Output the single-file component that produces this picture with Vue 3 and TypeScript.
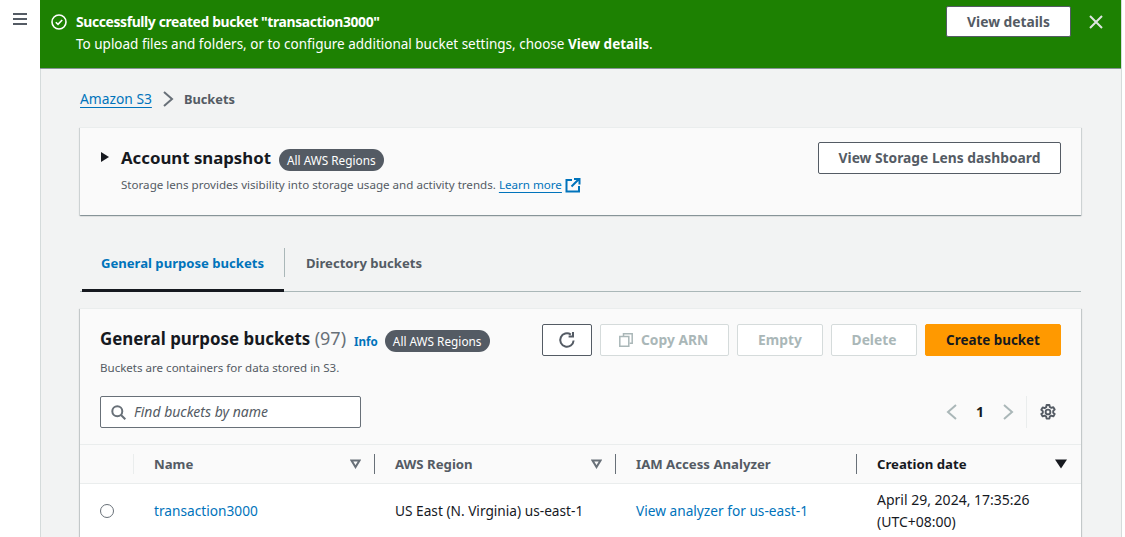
<script setup lang="ts">
interface Col { label: string; width: number; filter: 'none' | 'outline' | 'solid'; dark?: boolean }
const cols: Col[] = [
  { label: 'Name', width: 241, filter: 'outline' },
  { label: 'AWS Region', width: 241, filter: 'outline' },
  { label: 'IAM Access Analyzer', width: 241, filter: 'none' },
  { label: 'Creation date', width: 224, filter: 'solid', dark: true }
]
</script>

<template>
  <div class="page">
    <aside class="side">
      <svg class="menu" width="14" height="14" viewBox="0 0 14 14"><path d="M0 2h14M0 7h14M0 12h14" stroke="#545b64" stroke-width="2" fill="none" /></svg>
    </aside>
    <main class="main">
      <div class="banner">
        <svg class="ok" width="16" height="16" viewBox="0 0 16 16" fill="none" stroke="#fff" stroke-width="1.6"><circle cx="8" cy="8" r="7" /><path d="M4.8 8.2l2.2 2.2 4.2-4.4" /></svg>
        <div class="banner-text">
          <div class="b-title">Successfully created bucket "transaction3000"</div>
          <div class="b-sub">To upload files and folders, or to configure additional bucket settings, choose <b>View details</b>.</div>
        </div>
        <button class="btn details">View details</button>
        <svg class="close" width="14" height="14" viewBox="0 0 14 14"><path d="M1 1l12 12M13 1L1 13" stroke="#dfe5e2" stroke-width="2" fill="none" /></svg>
      </div>

      <div class="content">
        <nav class="crumbs">
          <a class="link crumb">Amazon S3</a>
          <svg width="12" height="16" viewBox="0 0 12 16" fill="none" stroke="#687078" stroke-width="2"><path d="M2 1l8 7-8 7" /></svg>
          <span class="here">Buckets</span>
        </nav>

        <section class="snapshot">
          <div>
            <div class="snap-head">
              <span class="caret"></span>
              <h2 class="snap-title">Account snapshot</h2>
              <span class="pill">All AWS Regions</span>
            </div>
            <p class="snap-desc"><span>Storage lens provides visibility into storage usage and activity trends.</span><a class="link learn">Learn more</a>
              <svg class="ext" width="16" height="15" viewBox="0 0 16 15" fill="none" stroke="#0073bb" stroke-width="2"><path d="M7 2H1.5v11.5H14V8M6.5 8.5L14 1M9 1h5.5v5.5" /></svg>
            </p>
          </div>
          <button class="btn lens">View Storage Lens dashboard</button>
        </section>

        <div class="tabs">
          <div class="tab active">General purpose buckets</div>
          <div class="tab">Directory buckets</div>
        </div>

        <section class="table-card">
          <header class="t-head">
            <div class="t-left">
              <div class="t-title-row">
                <h2 class="t-title">General purpose buckets <span class="count">(97)</span></h2>
                <a class="info">Info</a>
                <span class="pill">All AWS Regions</span>
              </div>
              <p class="t-desc">Buckets are containers for data stored in S3.</p>
            </div>
            <div class="actions">
              <button class="btn refresh" aria-label="Refresh">
                <svg width="18" height="18" viewBox="0 0 18 18" fill="none" stroke="#545b64" stroke-width="2"><path d="M15.6 9.5A6.7 6.7 0 1 1 12.8 3.6" /><path d="M15 1v4.4h-4.4" /></svg>
              </button>
              <button class="btn off copy">
                <svg width="14" height="14" viewBox="0 0 14 14" fill="none" stroke="#aab7b8" stroke-width="1.5"><path d="M4.5 3V.8h8.7v9.4h-2.6" /><path d="M.8 3.5h9v9.7H.8z" /></svg>
                Copy ARN
              </button>
              <button class="btn off empty">Empty</button>
              <button class="btn off del">Delete</button>
              <button class="btn create">Create bucket</button>
            </div>
          </header>

          <div class="tools">
            <div class="search">
              <svg width="15" height="15" viewBox="0 0 15 15" fill="none" stroke="#687078" stroke-width="2"><circle cx="6.3" cy="6.3" r="5" /><path d="M10 10l4.3 4.3" /></svg>
              <span class="ph">Find buckets by name</span>
            </div>
            <div class="pager">
              <svg width="12" height="16" viewBox="0 0 12 16" fill="none" stroke="#aab7b8" stroke-width="2"><path d="M10 1L2 8l8 7" /></svg>
              <span class="num">1</span>
              <svg width="12" height="16" viewBox="0 0 12 16" fill="none" stroke="#aab7b8" stroke-width="2"><path d="M2 1l8 7-8 7" /></svg>
              <span class="pager-sep"></span>
              <svg class="gear" width="16" height="16" viewBox="0 0 16 16" fill="none" stroke="#545b64"><circle cx="8" cy="8" r="2.4" stroke-width="1.9" /><path d="M6.6 1h2.8l.4 2 1.6.9 1.9-.7 1.4 2.4-1.5 1.3v1.8l1.5 1.3-1.4 2.4-1.9-.7-1.6.9-.4 2H6.6l-.4-2-1.6-.9-1.9.7-1.4-2.4 1.5-1.3V7.1L1.3 5.8l1.4-2.4 1.9.7 1.6-.9z" stroke-width="1.9" stroke-linejoin="round" /></svg>
            </div>
          </div>

          <div class="tr th-row">
            <div class="sel"><span class="sel-sep"></span></div>
            <div v-for="c in cols" :key="c.label" class="th" :class="{ dark: c.dark }" :style="{ width: c.width + 'px' }">
              <span>{{ c.label }}</span>
              <svg v-if="c.filter === 'outline'" class="sort" width="11" height="10" viewBox="0 0 11 10" fill="none" stroke="#687078" stroke-width="2"><path d="M1.5 1.5h8L5.5 8z" /></svg>
              <svg v-else-if="c.filter === 'solid'" class="sort" width="12" height="10" viewBox="0 0 12 10" fill="#16191f"><path d="M0 .5h12L6 9.5z" /></svg>
              <span v-if="c.label !== 'Creation date'" class="th-sep"></span>
            </div>
          </div>
          <div class="tr body-row">
            <div class="sel"><span class="radio"></span></div>
            <div class="td" style="width: 241px"><a class="plain">transaction3000</a></div>
            <div class="td" style="width: 241px">US East (N. Virginia) us-east-1</div>
            <div class="td" style="width: 241px"><a class="plain">View analyzer for us-east-1</a></div>
            <div class="td date" style="width: 224px">April 29, 2024, 17:35:26 (UTC+08:00)</div>
          </div>
        </section>
      </div>
    </main>
  </div>
</template>

<style>
html, body { margin: 0; background: #fff; overflow: hidden; }
</style>

<style scoped>
* { box-sizing: border-box; }
.page { display: flex; height: 537px; overflow: hidden; font-family: "Noto Sans", sans-serif; font-size: 14px; line-height: 20px; color: #16191f; }
.side { width: 40px; flex: none; padding: 12px 0 0 13px; background: #fff; }
.menu { display: block; }
.main { width: 1082px; flex: none; background: #f2f3f3; border-right: 1px solid #d5dbdb; display: flex; flex-direction: column; }
.banner { height: 69px; flex: none; background: #1d8102; color: #fff; border-bottom: 1px solid #879596; display: flex; align-items: flex-start; padding: 7px 18px 0 11px; }
.ok { margin-top: 7px; flex: none; }
.banner-text { margin: 5px 0 0 9px; flex: 1; }
.b-title { font-weight: 700; font-size: 13.9px; letter-spacing: -0.37px; }
.b-sub { margin-top: 2px; font-size: 13.5px; }
.btn { font-family: inherit; font-size: 13.8px; font-weight: 700; line-height: 20px; border-radius: 2px; border: 1px solid #545b64; background: #fff; color: #545b64; padding: 0; display: flex; align-items: center; justify-content: center; }
.details { width: 125px; height: 31px; margin-right: 18px; flex: none; margin-top: -1px; }
.close { margin-top: 8px; flex: none; }
.content { flex: 1; border-left: 1px solid #d5dbdb; padding: 0 40px 0 39px; }
.link { color: #0073bb; text-decoration: underline; text-underline-offset: 3px; }
.crumbs { display: flex; align-items: center; height: 20px; margin-top: 20px; gap: 10px; }
.crumb { font-size: 13.8px; }
.here { color: #545b64; font-weight: 700; font-size: 12.8px; }
.snapshot { margin-top: 18px; height: 88px; background: #fafafa; box-shadow: 0 1px 1px 0 rgba(0, 28, 36, 0.3), 1px 1px 1px 0 rgba(0, 28, 36, 0.1), -1px 1px 1px 0 rgba(0, 28, 36, 0.1); display: flex; justify-content: space-between; align-items: flex-start; padding: 14px 20px 0 21px; border-top: 1px solid #eaeded; }
.snap-head { display: flex; align-items: center; height: 24px; margin-top: 4px; }
.caret { width: 0; height: 0; border-left: 8px solid #16191f; border-top: 5px solid transparent; border-bottom: 5px solid transparent; margin: -2px 12px 0 0; }
.snap-title { margin: 0; font-size: 16.8px; line-height: 24px; font-weight: 700; }
.pill { display: inline-block; background: #545b64; color: #fff; font-size: 11.8px; line-height: 22px; height: 22px; border-radius: 11px; padding: 0 8px; margin-left: 8px; margin-top: 3px; white-space: nowrap; }
.snap-desc { margin: 7px 0 0 20px; font-size: 11.6px; line-height: 16px; color: #545b64; display: flex; align-items: center; gap: 3px; white-space: nowrap; }
.learn { font-size: 11.6px; }
.lens { width: 243px; height: 32px; }
.tabs { display: flex; height: 56px; margin-top: 21px; border-bottom: 1px solid #aab7b8; padding-left: 2px; }
.tab { font-weight: 700; font-size: 13.1px; color: #545b64; line-height: 54px; padding: 0 22px; position: relative; }
.tab.active { color: #0073bb; width: 202px; padding: 0 0 0 19px; border-bottom: 3px solid #16191f; height: 56px; }
.tab.active::after { content: ""; position: absolute; right: -1px; top: 12px; height: 29px; width: 1px; background: #aab7b8; }
.table-card { margin-top: 16px; background: #fafafa; box-shadow: 0 1px 1px 0 rgba(0, 28, 36, 0.3), 1px 1px 1px 0 rgba(0, 28, 36, 0.15), -1px 1px 1px 0 rgba(0, 28, 36, 0.15); border-top: 1px solid #eaeded; height: 300px; }
.t-head { display: flex; justify-content: space-between; padding: 15px 20px 0 20px; height: 71px; }
.t-title-row { display: flex; align-items: center; height: 32px; }
.t-title { margin: -3px 0 0; font-size: 16.9px; line-height: 24px; font-weight: 700; }
.count { font-weight: 400; color: #687078; font-size: 18px; line-height: 1; }
.info { color: #0073bb; font-weight: 700; font-size: 11.6px; margin: 4px 0 0 8px; }
.t-title-row .pill { margin-left: 7px; margin-top: 2px; }
.t-desc { margin: 4px 0 0; font-size: 11.55px; line-height: 16px; color: #545b64; }
.actions { display: flex; gap: 8px; }
.actions .btn { height: 32px; }
.refresh { width: 50px; }
.off { border-color: #d5dbdb; color: #aab7b8; }
.actions .copy { width: 129px; gap: 8px; justify-content: flex-start; padding-left: 18px; }
.empty { width: 86px; }
.del { width: 86px; }
.actions .create { width: 136px; background: #ff9900; border-color: #ff9900; color: #16191f; font-size: 13.4px; }
.tools { display: flex; justify-content: space-between; padding: 16px 25px 0 20px; height: 64px; }
.search { width: 261px; height: 32px; background: #fff; border: 1px solid #687078; border-radius: 2px; display: flex; align-items: center; padding-left: 10px; gap: 8px; }
.ph { font-style: italic; color: #545b64; font-size: 14px; }
.pager { display: flex; align-items: center; height: 32px; }
.num { font-size: 14px; font-weight: 700; width: 44px; text-align: center; }
.pager-sep { width: 1px; height: 32px; background: #eaeded; margin: 0 13px 0 12px; }
.tr { display: flex; }
.th-row { height: 40px; border-top: 1px solid #eaeded; border-bottom: 1px solid #eaeded; }
.sel { width: 54px; position: relative; display: flex; align-items: center; padding-left: 20px; flex: none; }
.sel-sep { position: absolute; right: 0; top: 9px; height: 20px; width: 1px; background: #eaeded; }
.th { display: flex; align-items: center; justify-content: space-between; position: relative; font-weight: 700; font-size: 13.2px; color: #545b64; padding: 0 14px 0 20px; }
.th.dark { color: #16191f; padding-right: 14px; }
.th-sep { position: absolute; right: 0; top: 9px; height: 20px; width: 1px; background: #687078; }
.sort { flex: none; }
.body-row { height: 53px; background: #fff; align-items: center; }
.radio { width: 14px; height: 14px; border: 1.3px solid #687078; border-radius: 50%; display: block; background: #fff; }
.td { padding-left: 20px; font-size: 13.7px; line-height: 22px; }
.plain { color: #0073bb; }
.date { padding-right: 20px; font-size: 14px; }
</style>
